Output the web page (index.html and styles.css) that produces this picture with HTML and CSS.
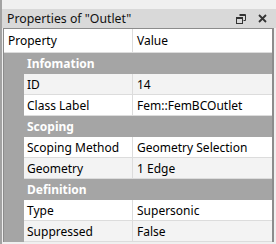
FILE: index.html
```html
<!DOCTYPE html>
<html>
<head>
<meta charset="utf-8">
<link rel="stylesheet" href="styles.css">
</head>
<body>
<div class="window">
  <div class="topstrip"></div>
  <div class="titlebar">
    <span class="title">Properties of "Outlet"</span>
    <span class="icons">
      <svg class="ico" width="10" height="10" viewBox="0 0 10 10">
        <path d="M3.5 0.5h6v6h-2" fill="none" stroke="#333" stroke-width="1"/>
        <path d="M3.5 1.5h6" stroke="#333" stroke-width="1"/>
        <rect x="0.5" y="3.5" width="6" height="6" fill="none" stroke="#333" stroke-width="1"/>
        <path d="M0.5 4.5h6" stroke="#333" stroke-width="1"/>
      </svg>
      <svg class="ico close" width="9" height="9" viewBox="0 0 9 9">
        <path d="M1 1L8 8M8 1L1 8" stroke="#333" stroke-width="1.8"/>
      </svg>
    </span>
  </div>
  <div class="table">
    <div class="row head">
      <div class="c1">Property</div>
      <div class="c2">Value</div>
    </div>
    <div class="row group"><div class="gname">Infomation</div></div>
    <div class="row item alt"><div class="indent"></div><div class="c1">ID</div><div class="c2">14</div></div>
    <div class="row item"><div class="indent"></div><div class="c1">Class Label</div><div class="c2">Fem::FemBCOutlet</div></div>
    <div class="row group"><div class="gname">Scoping</div></div>
    <div class="row item"><div class="indent"></div><div class="c1">Scoping Method</div><div class="c2">Geometry Selection</div></div>
    <div class="row item alt"><div class="indent"></div><div class="c1">Geometry</div><div class="c2">1 Edge</div></div>
    <div class="row group"><div class="gname">Definition</div></div>
    <div class="row item"><div class="indent"></div><div class="c1">Type</div><div class="c2">Supersonic</div></div>
    <div class="row item alt"><div class="indent"></div><div class="c1">Suppressed</div><div class="c2">False</div></div>
  </div>
</div>
</body>
</html>
```
FILE: styles.css
```css
html, body {
  margin: 0;
  padding: 0;
}
body {
  width: 276px;
  height: 244px;
  overflow: hidden;
  background: #f0f0f0;
  font-family: "Noto Sans", "Liberation Sans", sans-serif;
  font-size: 12px;
  color: #000;
}
.window {
  height: 244px;
  border-left: 2px solid #a3a3a3;
  box-sizing: border-box;
}
.topstrip {
  height: 9px;
  background: #f0f0f0;
}
.titlebar {
  height: 19px;
  background: #d9d9d9;
  display: flex;
  align-items: center;
  justify-content: space-between;
  padding: 0 9px 0 5px;
}
.title {
  font-size: 12.3px;
  color: #111;
  line-height: 19px;
}
.icons {
  display: flex;
  align-items: center;
  gap: 12px;
}
.ico { display: block; }
.table {
  margin-left: 1px;
  width: 268px;
  border: 1px solid #8c8c8c;
  border-right: 2px solid #8c8c8c;
  border-bottom: none;
  background: #fff;
}
.row {
  display: flex;
  height: 21px;
  box-sizing: border-box;
  border-bottom: 1px solid #dcdcdc;
  align-items: center;
}
.row.head {
  height: 24px;
  background: #fff;
  border-bottom: 1px solid #dcdcdc;
}
.row.head .c1 {
  width: 124px;
  padding-left: 4px;
  border-right: 1px solid #dcdcdc;
  height: 100%;
  display: flex;
  align-items: center;
}
.row.head .c2 {
  padding-left: 4px;
}
.row.group {
  background: #a5a5a5;
  border-bottom: 1px solid #a5a5a5;
}
.gname {
  padding-left: 23px;
  color: #fff;
  font-weight: bold;
}
.row.item { background: #fff; }
.row.item.alt { background: #f3f3f3; }
.indent {
  width: 20px;
  height: 21px;
  margin-bottom: -1px;
  background: #a5a5a5;
  flex: none;
}
.row.item .c1 {
  width: 105px;
  padding-left: 3px;
  height: 100%;
  border-right: 1px solid #dcdcdc;
  display: flex;
  align-items: center;
}
.row.item .c2 {
  padding-left: 4px;
}
```
